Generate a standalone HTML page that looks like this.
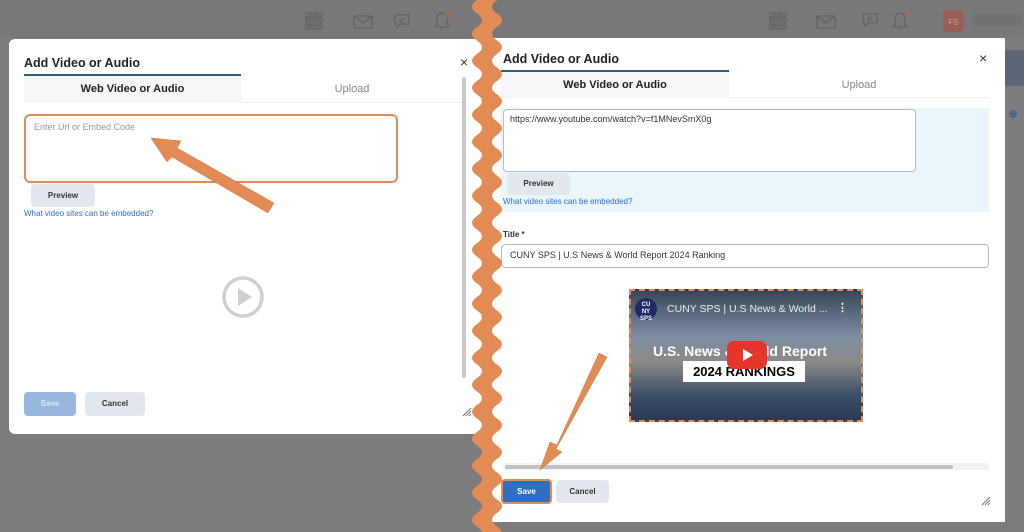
<!DOCTYPE html>
<html><head><meta charset="utf-8"><style>
*{margin:0;padding:0;box-sizing:border-box}
body{width:1024px;height:532px;overflow:hidden;background:#7c7c7e;font-family:"Liberation Sans",sans-serif;position:relative}
.a{position:absolute}
.modal{background:#fff;border-radius:6px}
.t{font-size:12.5px;font-weight:bold;color:#222}
.tab{font-size:11px;text-align:center;line-height:27px}
.btn{border-radius:4px;font-size:8px;font-weight:bold;text-align:center;color:#333}
.link{font-size:8px;color:#2b70c9}
</style></head><body>
<div class="a" style="left:0;top:0;width:1024px;height:38px;background:#78787a"></div>
<svg class="a" style="left:0;top:0" width="1024" height="40">
<g fill="none" stroke="#646466" stroke-width="1.3">
<g transform="translate(306,13)"><rect x="0" y="0" width="4" height="4"/><rect x="6" y="0" width="4" height="4"/><rect x="12" y="0" width="4" height="4"/><rect x="0" y="6" width="4" height="4"/><rect x="6" y="6" width="4" height="4"/><rect x="12" y="6" width="4" height="4"/><rect x="0" y="12" width="4" height="4"/><rect x="6" y="12" width="4" height="4"/><rect x="12" y="12" width="4" height="4"/></g>
<rect x="354" y="16" width="18" height="12" rx="1"/><path d="M354 16l9 7 9-7"/>
<path d="M395 15h14v9h-8l-4 3v-3h-2z"/><path d="M399 19h6M399 22h4"/>
<path d="M435 27h14l-2-3v-6a5 5 0 0 0-10 0v6z M440 29h4"/>
<g transform="translate(770,13)"><rect x="0" y="0" width="4" height="4"/><rect x="6" y="0" width="4" height="4"/><rect x="12" y="0" width="4" height="4"/><rect x="0" y="6" width="4" height="4"/><rect x="6" y="6" width="4" height="4"/><rect x="12" y="6" width="4" height="4"/><rect x="0" y="12" width="4" height="4"/><rect x="6" y="12" width="4" height="4"/><rect x="12" y="12" width="4" height="4"/></g>
<rect x="817" y="16" width="18" height="12" rx="1"/><path d="M817 16l9 7 9-7"/>
<path d="M863 14h14v9h-8l-4 3v-3h-2z"/><path d="M867 18h6M867 21h4"/>
<path d="M893 27h14l-2-3v-6a5 5 0 0 0-10 0v6z M898 29h4"/>
</g>
<circle cx="448" cy="15" r="2.5" fill="#a86a45"/><circle cx="907" cy="14" r="2.5" fill="#a86a45"/>
<rect x="943" y="10" width="21" height="22" rx="3" fill="#9a5e58"/>
<text x="953.5" y="25" font-size="8" fill="#c99" text-anchor="middle" font-family="Liberation Sans">FS</text>
<rect x="972" y="14" width="50" height="12" rx="2" fill="#727274"/>
</svg>
<div class="a" style="left:1005px;top:50px;width:19px;height:36px;background:#5a6677"></div>
<div class="a" style="left:1009px;top:110px;width:8px;height:8px;border-radius:50%;background:#4e6a8a"></div>

<div class="a modal" style="left:9px;top:39px;width:475px;height:395px"></div>
<div class="a t" style="left:24px;top:56px">Add Video or Audio</div>
<div class="a" style="left:460px;top:54px;font-size:14px;color:#333">×</div>
<div class="a" style="left:24px;top:74px;width:217px;height:2px;background:#2c5f7c"></div>
<div class="a tab" style="left:24px;top:76px;width:217px;height:27px;background:#f6f6f6;font-weight:bold;color:#222">Web Video or Audio</div>
<div class="a tab" style="left:241px;top:76px;width:222px;height:27px;color:#888;border-bottom:1px solid #eee">Upload</div>
<div class="a" style="left:24px;top:114px;width:374px;height:69px;border:2px solid #e38b54;border-radius:6px"></div>
<div class="a" style="left:34px;top:122px;font-size:9px;color:#999">Enter Url or Embed Code</div>
<div class="a btn" style="left:31px;top:184px;width:64px;height:23px;background:#e3e8ef;line-height:23px">Preview</div>
<div class="a link" style="left:24px;top:209px">What video sites can be embedded?</div>
<svg class="a" style="left:221px;top:275px" width="44" height="44"><circle cx="22" cy="22" r="19" fill="none" stroke="#cfcfcf" stroke-width="3.5"/><path d="M17 13v18l14-9z" fill="#cfcfcf"/></svg>
<div class="a" style="left:462px;top:77px;width:4px;height:301px;background:#c9c9c9;border-radius:2px"></div>
<div class="a btn" style="left:24px;top:392px;width:52px;height:24px;background:#97b6dc;color:#dfe8f5;line-height:24px">Save</div>
<div class="a btn" style="left:85px;top:392px;width:60px;height:24px;background:#e3e8ef;line-height:24px">Cancel</div>
<svg class="a" style="left:461px;top:406px" width="12" height="12"><path d="M2 10L10 2M5 10L10 5M8 10L10 8" stroke="#777" stroke-width="1"/></svg>

<div class="a modal" style="left:490px;top:38px;width:515px;height:484px;border-radius:0"></div>
<div class="a t" style="left:503px;top:52px">Add Video or Audio</div>
<div class="a" style="left:979px;top:50px;font-size:14px;color:#333">×</div>
<div class="a" style="left:501px;top:70px;width:228px;height:2px;background:#2c5f7c"></div>
<div class="a tab" style="left:501px;top:72px;width:228px;height:26px;background:#f6f6f6;font-weight:bold;color:#222;line-height:26px">Web Video or Audio</div>
<div class="a tab" style="left:729px;top:72px;width:260px;height:26px;color:#888;border-bottom:1px solid #eee;line-height:26px">Upload</div>
<div class="a" style="left:501px;top:108px;width:488px;height:104px;background:#eaf5fc"></div>
<div class="a" style="left:503px;top:109px;width:413px;height:63px;border:1px solid #bbb;border-radius:4px;background:#fff"></div>
<div class="a" style="left:510px;top:114px;font-size:9px;color:#333">https://www.youtube.com/watch?v=f1MNevSmX0g</div>
<div class="a btn" style="left:507px;top:173px;width:63px;height:22px;background:#e3e8ef;line-height:22px">Preview</div>
<div class="a link" style="left:503px;top:197px">What video sites can be embedded?</div>
<div class="a" style="left:503px;top:230px;font-size:8px;font-weight:bold;color:#333">Title *</div>
<div class="a" style="left:501px;top:244px;width:488px;height:24px;border:1px solid #bbb;border-radius:4px"></div>
<div class="a" style="left:510px;top:250px;font-size:9px;color:#333">CUNY SPS | U.S News &amp; World Report 2024 Ranking</div>
<div class="a" style="left:629px;top:289px;width:234px;height:133px;border:2px dashed #e38b54;background:linear-gradient(180deg,#3a4658 0%,#7c8da3 35%,#8a8a88 55%,#3d5068 80%,#2a3a52 100%);overflow:hidden">
<div class="a" style="left:4px;top:7px;width:22px;height:22px;border-radius:50%;background:#1e2b66;color:#fff;font-size:6px;font-weight:bold;text-align:center;line-height:7px;padding-top:4px">CU<br>NY<br>SPS</div>
<div class="a" style="left:36px;top:12px;font-size:10.5px;color:#e8ecf2;white-space:nowrap">CUNY SPS | U.S News &amp; World ...</div>
<div class="a" style="left:206px;top:10px;font-size:11px;color:#fff;font-weight:bold">⋮</div>
<div class="a" style="left:22px;top:52px;font-size:14px;color:#fff;font-weight:bold;white-space:nowrap">U.S. News &amp; World Report</div>
<div class="a" style="left:52px;top:70px;width:122px;height:21px;background:#fff;font-size:13px;font-weight:bold;color:#000;text-align:center;line-height:21px">2024 RANKINGS</div>
<div class="a" style="left:96px;top:50px;width:40px;height:28px;border-radius:7px;background:#e6352b"></div>
<svg class="a" style="left:96px;top:50px" width="40" height="28"><path d="M16 8v12l10-6z" fill="#fff"/></svg>
</div>
<div class="a" style="left:503px;top:463px;width:486px;height:7px;background:#f3f3f3"></div>
<div class="a" style="left:505px;top:465px;width:448px;height:4px;background:#c2c2c2;border-radius:2px"></div>
<div class="a btn" style="left:501px;top:479px;width:51px;height:25px;background:#2e6fc4;color:#fff;line-height:21px;border:2px solid #e38b54">Save</div>
<div class="a btn" style="left:556px;top:480px;width:53px;height:23px;background:#e3e8ef;line-height:23px">Cancel</div>
<svg class="a" style="left:980px;top:495px" width="12" height="12"><path d="M2 10L10 2M5 10L10 5M8 10L10 8" stroke="#777" stroke-width="1"/></svg>

<svg class="a" style="left:0;top:0" width="1024" height="532">
<path fill="#e38b54" d="M477 0 Q467 6.75 477 13.5 T477 27 T477 40.5 T477 54 T477 67.5 T477 81 T477 94.5 T477 108 T477 121.5 T477 135 T477 148.5 T477 162 T477 175.5 T477 189 T477 202.5 T477 216 T477 229.5 T477 243 T477 256.5 T477 270 T477 283.5 T477 297 T477 310.5 T477 324 T477 337.5 T477 351 T477 364.5 T477 378 T477 391.5 T477 405 T477 418.5 T477 432 T477 445.5 T477 459 T477 472.5 T477 486 T477 499.5 T477 513 T477 526.5 T477 540 L497 540 Q507 533.25 497 526.5 T497 513 T497 499.5 T497 486 T497 472.5 T497 459 T497 445.5 T497 432 T497 418.5 T497 405 T497 391.5 T497 378 T497 364.5 T497 351 T497 337.5 T497 324 T497 310.5 T497 297 T497 283.5 T497 270 T497 256.5 T497 243 T497 229.5 T497 216 T497 202.5 T497 189 T497 175.5 T497 162 T497 148.5 T497 135 T497 121.5 T497 108 T497 94.5 T497 81 T497 67.5 T497 54 T497 40.5 T497 27 T497 13.5 T497 0 Z"/>
<g fill="#e38b54" stroke="#c9743f" stroke-width="0.5">
<path d="M274 203L177 148L181 141L151 138L167 162L172 157L268 213z"/>
<path d="M599 353L557 445L550 442L540 470L562 452L556 449L607 357z"/>
</g>
</svg>
</body></html>
